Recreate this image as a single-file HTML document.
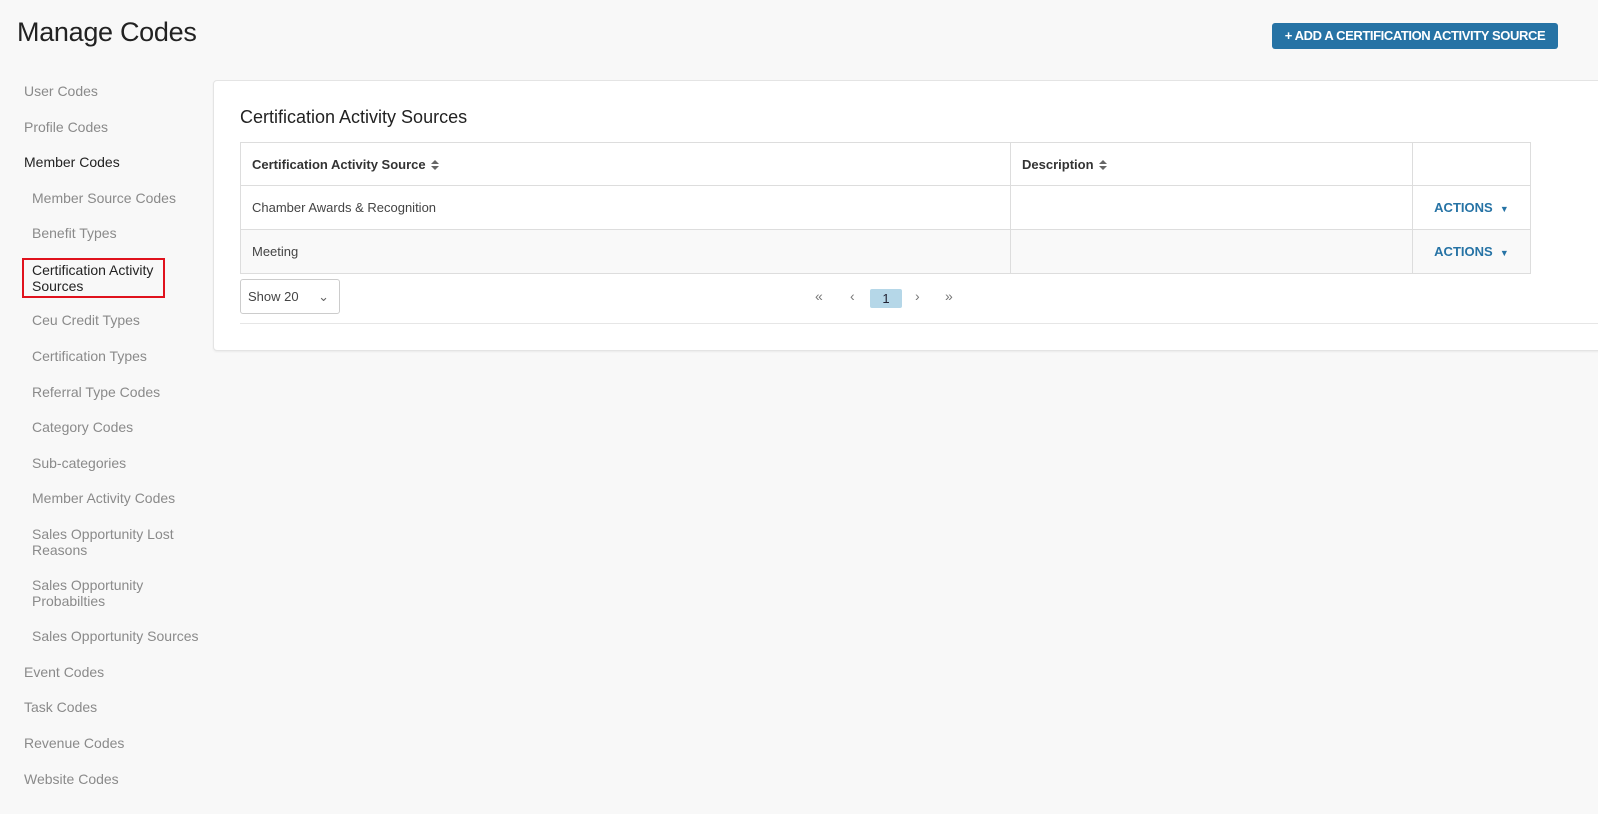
<!DOCTYPE html>
<html><head><style>
*{box-sizing:border-box;margin:0;padding:0}
body{width:1598px;height:814px;background:#f8f8f8;font-family:"Liberation Sans",sans-serif;position:relative;overflow:hidden;color:#333}
h1{position:absolute;left:17px;top:17px;font-size:27px;font-weight:normal;color:#222;letter-spacing:-0.3px}
.btn{position:absolute;left:1272px;top:23px;width:286px;height:26px;background:#2673a5;border-radius:3px;color:#fff;font-size:13px;font-weight:bold;line-height:26px;text-align:center;letter-spacing:-0.4px}
.nav div{position:absolute;font-size:14px;color:#8a8a8a;line-height:16px}
.nav .s{left:32px}.nav .t{left:24px}
.nav .b{color:#222}
.sel{position:absolute;left:22px;top:258px;width:143px;height:40px;border:2px solid #e0121d}
.card{position:absolute;left:213px;top:80px;width:1400px;height:271px;background:#fff;border:1px solid #e4e4e4;border-radius:4px;box-shadow:0 1px 2px rgba(0,0,0,.06)}
.card h2{position:absolute;left:26px;top:26px;font-size:18px;font-weight:normal;color:#222}
table{position:absolute;left:26px;top:61px;width:1291px;border-collapse:collapse;font-size:13px}
td{border:1px solid #ddd;padding:0 11px;color:#444}
.hd td{height:43px;font-weight:bold;color:#333}
.r td{height:44px}
.g td{background:#f9f9f9}
.act{color:#2673a5;font-weight:bold;text-align:center}
.sort{display:inline-block;vertical-align:middle;margin-left:5px;width:8px;height:10px;position:relative}
.sort:before,.sort:after{content:"";position:absolute;left:0;border-left:4px solid transparent;border-right:4px solid transparent}
.sort:before{top:0;border-bottom:4px solid #666}
.sort:after{bottom:0;border-top:4px solid #666}
.sel2{position:absolute;left:26px;top:198px;width:100px;height:35px;border:1px solid #ccc;border-radius:3px;font-size:13px;line-height:33px;padding-left:7px;color:#444}
.pg{position:absolute;top:207px;font-size:14px;color:#777}
.hr{position:absolute;left:26px;top:242px;width:1400px;border-top:1px solid #e6e6e6}
</style></head><body>
<h1>Manage Codes</h1>
<div class="btn">+ ADD A CERTIFICATION ACTIVITY SOURCE</div>
<div class="nav">
<div class="t" style="top:83px">User Codes</div>
<div class="t" style="top:119px">Profile Codes</div>
<div class="t b" style="top:154px">Member Codes</div>
<div class="s" style="top:190px">Member Source Codes</div>
<div class="s" style="top:225px">Benefit Types</div>
<div class="s b" style="top:262px;width:140px">Certification Activity Sources</div>
<div class="s" style="top:312px">Ceu Credit Types</div>
<div class="s" style="top:348px">Certification Types</div>
<div class="s" style="top:384px">Referral Type Codes</div>
<div class="s" style="top:419px">Category Codes</div>
<div class="s" style="top:455px">Sub-categories</div>
<div class="s" style="top:490px">Member Activity Codes</div>
<div class="s" style="top:526px;width:150px">Sales Opportunity Lost Reasons</div>
<div class="s" style="top:577px;width:150px">Sales Opportunity Probabilties</div>
<div class="s" style="top:628px">Sales Opportunity Sources</div>
<div class="t" style="top:664px">Event Codes</div>
<div class="t" style="top:699px">Task Codes</div>
<div class="t" style="top:735px">Revenue Codes</div>
<div class="t" style="top:771px">Website Codes</div>
</div>
<div class="sel"></div>
<div class="card">
<h2>Certification Activity Sources</h2>
<table>
<tr class="hd"><td style="width:770px">Certification Activity Source<span class="sort"></span></td><td style="width:402px">Description<span class="sort"></span></td><td></td></tr>
<tr class="r"><td>Chamber Awards &amp; Recognition</td><td></td><td class="act">ACTIONS &nbsp;<span style="font-size:9px">&#9660;</span></td></tr>
<tr class="r g"><td>Meeting</td><td></td><td class="act">ACTIONS &nbsp;<span style="font-size:9px">&#9660;</span></td></tr>
</table>
<div class="sel2">Show 20 <span style="position:absolute;right:10px;top:0;color:#666">&#8964;</span></div>
<div class="pg" style="left:601px">&laquo;</div>
<div class="pg" style="left:636px">&lsaquo;</div>
<div style="position:absolute;left:656px;top:208px;width:32px;height:19px;background:#b5d7e8;border-radius:2px;text-align:center;font-size:13px;line-height:19px;color:#223">1</div>
<div class="pg" style="left:701px">&rsaquo;</div>
<div class="pg" style="left:731px">&raquo;</div>
<div class="hr"></div>
</div>
</body></html>
